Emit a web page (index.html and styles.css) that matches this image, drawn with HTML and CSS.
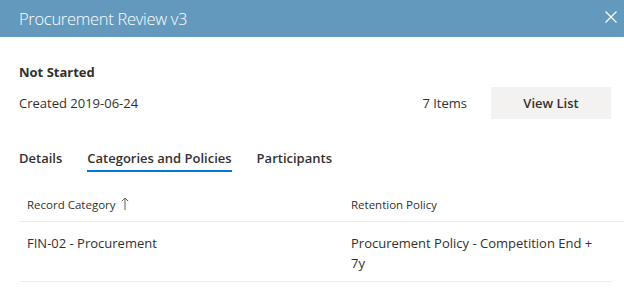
FILE: index.html
```html
<!DOCTYPE html>
<html>
<head>
<meta charset="utf-8">
<link rel="stylesheet" href="styles.css">
</head>
<body>
<div class="panel">
  <div class="header">
    <span class="title">Procurement Review v3</span>
    <svg class="close" width="12" height="12" viewBox="0 0 12 12"><path d="M0.5 0.5 L11.5 11.5 M11.5 0.5 L0.5 11.5" stroke="#fff" stroke-width="1.2" fill="none"/></svg>
  </div>
  <div class="body">
    <div class="status">Not Started</div>
    <div class="meta">
      <span class="created">Created 2019-06-24</span>
      <span class="count">7 Items</span>
      <button class="btn">View List</button>
    </div>
    <div class="tabs">
      <span class="tab">Details</span>
      <span class="tab active">Categories and Policies</span>
      <span class="tab">Participants</span>
    </div>
    <div class="table">
      <div class="thead">
        <div class="th c1">Record Category <svg class="arrow" width="8" height="14" viewBox="0 0 8 14"><path d="M4 1 V13 M0.8 4.2 L4 1 L7.2 4.2" stroke="#605e5c" stroke-width="1" fill="none"/></svg></div>
        <div class="th c2">Retention Policy</div>
      </div>
      <div class="trow">
        <div class="td c1">FIN-02 - Procurement</div>
        <div class="td c2">Procurement Policy - Competition End + 7y</div>
      </div>
    </div>
  </div>
</div>
</body>
</html>
```
FILE: styles.css
```css
html, body {
  margin: 0;
  padding: 0;
  background: #fff;
}
body {
  font-family: "Open Sans", "Noto Sans", sans-serif;
  color: #323130;
  width: 624px;
  height: 294px;
  overflow: hidden;
}
.header {
  height: 37px;
  background: #6399bc;
  display: flex;
  align-items: center;
  justify-content: space-between;
  padding: 0 7px 0 19px;
}
.title {
  color: #fff;
  font-size: 16.5px;
  font-weight: 300;
  letter-spacing: -0.3px;
  margin-top: -1px;
}
.close {
  display: block;
  margin-top: -3px;
}
.body {
  padding: 25px 0 0 19px;
}
.status {
  font-size: 13px;
  font-weight: 700;
  line-height: 20px;
}
.meta {
  display: flex;
  align-items: center;
  margin-top: 5px;
  margin-right: 13px;
  font-size: 13px;
}
.created {
  flex: 1;
}
.count {
  margin-right: 24px;
}
.btn {
  width: 120px;
  height: 32px;
  border: none;
  background: #f3f2f1;
  font-family: inherit;
  font-size: 13px;
  font-weight: 600;
  color: #323130;
  padding: 0;
}
.tabs {
  display: flex;
  gap: 25px;
  margin-top: 29px;
  font-size: 13px;
  font-weight: 600;
}
.tab {
  line-height: 20px;
  padding-bottom: 2px;
  border-bottom: 2px solid transparent;
}
.tab.active {
  border-bottom-color: #0078d4;
}
.table {
  margin-top: 22px;
}
.thead {
  display: flex;
  height: 27px;
  border-bottom: 1px solid #edebe9;
  font-size: 11.5px;
  align-items: flex-start;
}
.trow {
  display: flex;
  width: 593px;
  padding: 11px 0 8px;
  border-bottom: 1px solid #f0efee;
  font-size: 13px;
  line-height: 20px;
}
.th, .td {
  padding-left: 8px;
  box-sizing: border-box;
}
.th {
  line-height: 16px;
  padding-top: 3px;
}
.c1 {
  width: 324px;
}
.c2 {
  flex: 1;
  padding-right: 8px;
}
.trow .c2 {
  padding-right: 12px;
}
.arrow {
  vertical-align: -2px;
  margin-left: 2px;
}
```
